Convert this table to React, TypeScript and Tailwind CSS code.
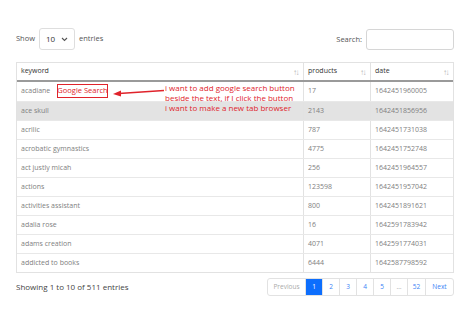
import React from "react"

const rows: [string, string, string][] = [
  ["acadiane", "17", "1642451960005"],
  ["ace skull", "2143", "1642451856956"],
  ["acrilic", "787", "1642451731038"],
  ["acrobatic gymnastics", "4775", "1642451752748"],
  ["act justly micah", "256", "1642451964557"],
  ["actions", "123598", "1642451957042"],
  ["activities assistant", "800", "1642451891621"],
  ["adalia rose", "16", "1642591783942"],
  ["adams creation", "4071", "1642591774031"],
  ["addicted to books", "6444", "1642587798592"],
]

const pages = ["1", "2", "3", "4", "5", "…", "52"]

function SortIcon() {
  return (
    <span className="text-[8px] leading-none text-[#b5b5b5] tracking-[-1.5px] pr-[1px]">↑↓</span>
  )
}

export default function App() {
  return (
    <div
      className="w-[474px] h-[317px] bg-white pt-[28px] pl-[16px] pr-[20px] text-[#555]"
      style={{ fontFamily: "'Open Sans', 'Liberation Sans', sans-serif" }}
    >
      <div className="flex items-end justify-between h-[22px]">
        <div className="flex items-center gap-[4px] self-center text-[7.5px]">
          <span>Show</span>
          <div className="flex items-center justify-between w-[36px] h-[22px] border border-[#dedede] rounded-[3px] px-[6px] text-[8px] text-[#333]">
            <span>10</span>
            <svg width="7" height="5" viewBox="0 0 7 5">
              <path d="M1 1l2.5 2.5L6 1" stroke="#555" strokeWidth="1.1" fill="none" />
            </svg>
          </div>
          <span>entries</span>
        </div>
        <div className="flex items-center gap-[4px] text-[7.5px] mt-[8px]">
          <span>Search:</span>
          <div className="w-[88px] h-[21px] border border-[#d6d6d6] rounded-[3px]" />
        </div>
      </div>

      <div className="relative mt-[12px] border border-[#e2e2e2] text-[7px]">
        <div className="flex h-[19px] border-b-2 border-[#9a9a9a] text-[#333] font-medium">
          <div className="w-[286px] flex items-center justify-between px-[4px]">
            <span>keyword</span>
            <SortIcon />
          </div>
          <div className="w-[67px] flex items-center justify-between px-[4px] border-l border-[#e2e2e2]">
            <span>products</span>
            <SortIcon />
          </div>
          <div className="flex-1 flex items-center justify-between px-[4px] border-l border-[#e2e2e2]">
            <span>date</span>
            <SortIcon />
          </div>
        </div>
        {rows.map(([k, p, d], i) => (
          <div
            key={k}
            className={`flex h-[19px] text-[#808080] ${i > 0 ? "border-t border-[#e8e8e8]" : ""} ${i === 1 ? "bg-[#e3e3e3]" : ""}`}
          >
            <div className="w-[286px] flex items-center px-[4px]">{k}</div>
            <div className="w-[67px] flex items-center px-[4px] border-l border-[#e2e2e2]">{p}</div>
            <div className="flex-1 flex items-center px-[4px] border-l border-[#e2e2e2]">{d}</div>
          </div>
        ))}

        <div className="absolute left-[40px] top-[21px] w-[51px] h-[14px] border-[1.5px] border-[#e0232b] flex items-center justify-center text-[7.5px] text-[#e0232b] leading-none whitespace-nowrap">
          Google Search
        </div>
        <svg className="absolute left-[94px] top-[25px]" width="54" height="10" viewBox="0 0 54 10">
          <path d="M53 2.5L8 5.5" stroke="#e0232b" strokeWidth="1.3" />
          <path d="M2 6L10 2.5L10 8.5Z" fill="#e0232b" />
        </svg>
        <div className="absolute left-[148px] top-[20px] text-[8px] leading-[10px] text-[#e0232b] whitespace-nowrap">
          <div>i want to add google search button</div>
          <div>beside the text, if I click the button</div>
          <div>i want to make a new tab browser</div>
        </div>
      </div>

      <div className="flex items-center justify-between mt-[5px]">
        <span className="text-[8px] text-[#444]">Showing 1 to 10 of 511 entries</span>
        <div className="flex h-[18px] border border-[#e2e2e2] rounded-[3px] text-[6.5px] text-[#3b82f6] overflow-hidden">
          <div className="w-[37px] flex items-center justify-center text-[#aaa]">Previous</div>
          {pages.map((p, i) => (
            <div
              key={p}
              className={`${p === "52" ? "w-[18px]" : "w-[17px]"} flex items-center justify-center border-l border-[#e2e2e2] ${i === 0 ? "bg-[#0d6efd] text-white" : ""} ${p === "…" ? "text-[#aaa]" : ""}`}
            >
              {p}
            </div>
          ))}
          <div className="w-[28px] flex items-center justify-center border-l border-[#e2e2e2]">Next</div>
        </div>
      </div>
    </div>
  )
}
